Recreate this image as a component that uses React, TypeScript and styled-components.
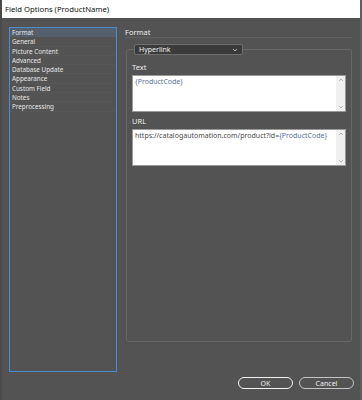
import * as React from 'react';
import styled, { createGlobalStyle } from 'styled-components';

const GlobalStyle = createGlobalStyle`
  html, body {
    margin: 0;
    padding: 0;
    background: #535353;
  }
  body {
    font-family: "Noto Sans", "Open Sans", sans-serif;
  }
`;

const Window = styled.div`
  width: 362px;
  height: 400px;
  display: flex;
  flex-direction: column;
  background: #535353;
  box-sizing: border-box;
  border-left: 2px solid #4a4a4a;
  border-right: 2px solid #5e5e5e;
  overflow: hidden;
`;

const TitleBar = styled.div`
  height: 18px;
  flex: none;
  background: #ffffff;
  color: #111;
  font-size: 7.7px;
  line-height: 18px;
  padding-left: 5px;
  margin-left: -2px;
  margin-right: -2px;
`;

const Body = styled.div`
  flex: 1;
  display: flex;
  flex-direction: column;
  padding: 9px 6px 12px 7px;
`;

const Main = styled.div`
  flex: 1;
  display: flex;
  gap: 8px;
`;

const Sidebar = styled.ul`
  margin: 0;
  padding: 0;
  list-style: none;
  width: 108px;
  height: 345px;
  box-sizing: border-box;
  border: 1px solid #4a8ccc;
`;

const Item = styled.li<{ $active?: boolean }>`
  height: 9.3px;
  line-height: 9px;
  font-size: 6.3px;
  padding-left: 2px;
  color: #e6e6e6;
  background: ${(p) => (p.$active ? '#56606c' : 'transparent')};
  border-bottom: 1px solid ${(p) => (p.$active ? '#56606c' : '#575757')};
  box-sizing: border-box;
`;

const Pane = styled.div`
  flex: 1;
  display: flex;
  flex-direction: column;
  padding-right: 2px;
`;

const Heading = styled.div`
  font-size: 7.5px;
  color: #ececec;
  height: 9px;
  line-height: 9px;
  margin-top: 1px;
  border-bottom: 1px solid #616161;
`;

const Group = styled.fieldset`
  margin: 6px 0 0 1px;
  padding: 3px 5px 0 5px;
  border: 1px solid #676767;
  border-radius: 2px;
  height: 298px;
  box-sizing: border-box;
  min-width: 0;
`;

const Legend = styled.legend`
  padding: 0;
  margin-left: 2px;
`;

const Dropdown = styled.div`
  width: 109px;
  height: 11px;
  box-sizing: border-box;
  background: #3b3b3b;
  border: 1px solid #6e6e6e;
  border-radius: 2px;
  display: flex;
  align-items: center;
  justify-content: space-between;
  padding: 0 4px;
  font-size: 7px;
  color: #f0f0f0;
`;

const Label = styled.div`
  font-size: 7.5px;
  color: #ececec;
  height: 10px;
  line-height: 10px;
  margin-top: 4px;
  margin-bottom: 3px;
`;

const Field = styled.div`
  height: 37px;
  display: flex;
  background: #ffffff;
  border: 1px solid #9a9a9a;
  box-sizing: border-box;
`;

const FieldText = styled.div`
  flex: 1;
  font-size: 7px;
  line-height: 9px;
  padding: 1px 2px;
  color: #4a4a4a;
  white-space: nowrap;
  overflow: hidden;
`;

const Token = styled.span`
  color: #5a6f99;
`;

const ScrollTrack = styled.div`
  width: 9px;
  background: #f0f0f0;
  display: flex;
  flex-direction: column;
  justify-content: space-between;
  align-items: center;
  padding: 2px 0;
`;

const Footer = styled.div`
  display: flex;
  justify-content: flex-end;
  gap: 6px;
  margin-top: 5px;
`;

const Button = styled.button<{ $default?: boolean }>`
  width: 55px;
  height: 12px;
  padding: 0;
  border-radius: 6px;
  background: #535353;
  border: ${(p) => (p.$default ? '1.5px solid #f2f2f2' : '1px solid #c4c4c4')};
  color: #eeeeee;
  font-family: inherit;
  font-size: 7px;
  line-height: 9px;
  box-sizing: border-box;
`;

const Chevron = ({ up, color }: { up?: boolean; color: string }) => (
  <svg width="6" height="4" viewBox="0 0 6 4">
    <path
      d={up ? 'M1 3 L3 1 L5 3' : 'M1 1 L3 3 L5 1'}
      fill="none"
      stroke={color}
      strokeWidth="0.8"
    />
  </svg>
);

const items = [
  'Format',
  'General',
  'Picture Content',
  'Advanced',
  'Database Update',
  'Appearance',
  'Custom Field',
  'Notes',
  'Preprocessing',
];

export default function App() {
  return (
    <>
      <GlobalStyle />
      <Window>
        <TitleBar>Field Options (ProductName)</TitleBar>
        <Body>
          <Main>
            <Sidebar>
              {items.map((it, i) => (
                <Item key={it} $active={i === 0}>
                  {it}
                </Item>
              ))}
            </Sidebar>
            <Pane>
              <Heading>Format</Heading>
              <Group>
                <Legend>
                  <Dropdown>
                    <span>Hyperlink</span>
                    <Chevron color="#cfcfcf" />
                  </Dropdown>
                </Legend>
                <Label>Text</Label>
                <Field>
                  <FieldText>
                    <Token>{'{ProductCode}'}</Token>
                  </FieldText>
                  <ScrollTrack>
                    <Chevron up color="#a8a8a8" />
                    <Chevron color="#a8a8a8" />
                  </ScrollTrack>
                </Field>
                <Label>URL</Label>
                <Field>
                  <FieldText>
                    https://catalogautomation.com/product?id=
                    <Token>{'{ProductCode}'}</Token>
                  </FieldText>
                  <ScrollTrack>
                    <Chevron up color="#a8a8a8" />
                    <Chevron color="#a8a8a8" />
                  </ScrollTrack>
                </Field>
              </Group>
            </Pane>
          </Main>
          <Footer>
            <Button $default>OK</Button>
            <Button>Cancel</Button>
          </Footer>
        </Body>
      </Window>
    </>
  );
}
